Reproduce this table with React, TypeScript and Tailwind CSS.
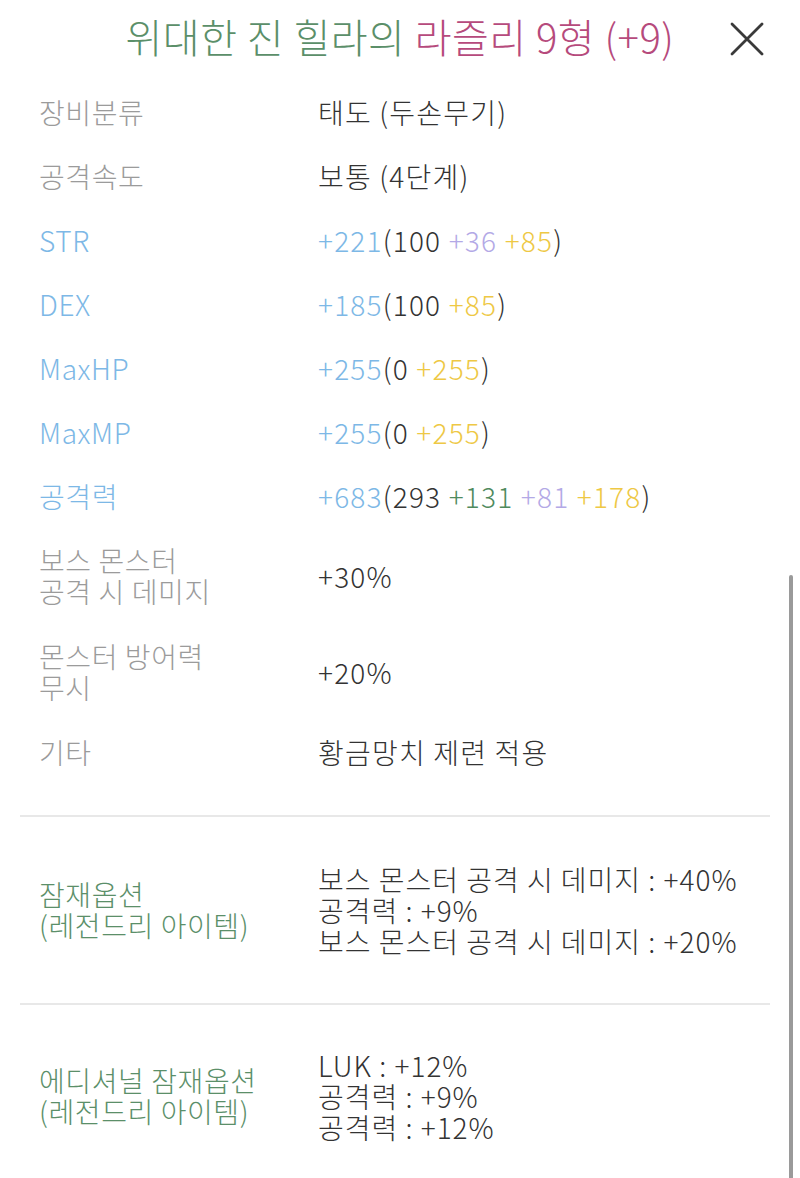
const font = { fontFamily: '"Noto Sans CJK KR", "Noto Sans", sans-serif' };

type Part = { t: string; c: string };

const BLUE = "text-[#7db8e6]";
const DARK = "text-[#333333]";
const PURPLE = "text-[#b3a9e6]";
const YELLOW = "text-[#eec845]";
const GREEN = "text-[#4f8a5d]";

function Stat({ parts }: { parts: Part[] }) {
  return (
    <span>
      {parts.map((p, i) => (
        <span key={i} className={p.c}>
          {p.t}
        </span>
      ))}
    </span>
  );
}

function Row({
  label,
  labelClass = "text-[#9b9b9b]",
  children,
  tall = false,
}: {
  label: React.ReactNode;
  labelClass?: string;
  children: React.ReactNode;
  tall?: boolean;
}) {
  return (
    <div className={`flex items-center ${tall ? "h-[96px]" : "h-[64px]"}`}>
      <div className={`w-[279px] shrink-0 leading-[31px] ${labelClass}`}>{label}</div>
      <div className="text-[#333333] leading-[31px] tracking-[1.2px]">{children}</div>
    </div>
  );
}

export default function App() {
  return (
    <div className="relative w-[800px] h-[1178px] overflow-hidden bg-white text-[28px] font-light tracking-[0.6px]" style={font}>
      <div className="h-[80px] flex items-center justify-center relative">
        <h1 className="text-[40px] font-light tracking-[0.5px] -mt-[8px]">
          <span className="text-[#5b8f69]">위대한 진 힐라의 </span>
          <span className="text-[#b64a7c]">라즐리 9형 (+9)</span>
        </h1>
        <button className="absolute left-[729px] top-[21px] w-[36px] h-[36px] flex items-center justify-center">
          <svg width="34" height="34" viewBox="0 0 34 34" fill="none" stroke="#3a3a3a" strokeWidth="2.8" strokeLinecap="round">
            <path d="M2 2 L32 32 M32 2 L2 32" />
          </svg>
        </button>
      </div>

      <div className="pl-[39px] pr-[30px]">
        <Row label="장비분류">태도 (두손무기)</Row>
        <Row label="공격속도">보통 (4단계)</Row>
        <Row label="STR" labelClass={BLUE}>
          <Stat
            parts={[
              { t: "+221", c: BLUE },
              { t: "(100 ", c: DARK },
              { t: "+36 ", c: PURPLE },
              { t: "+85", c: YELLOW },
              { t: ")", c: DARK },
            ]}
          />
        </Row>
        <Row label="DEX" labelClass={BLUE}>
          <Stat
            parts={[
              { t: "+185", c: BLUE },
              { t: "(100 ", c: DARK },
              { t: "+85", c: YELLOW },
              { t: ")", c: DARK },
            ]}
          />
        </Row>
        <Row label="MaxHP" labelClass={BLUE}>
          <Stat
            parts={[
              { t: "+255", c: BLUE },
              { t: "(0 ", c: DARK },
              { t: "+255", c: YELLOW },
              { t: ")", c: DARK },
            ]}
          />
        </Row>
        <Row label="MaxMP" labelClass={BLUE}>
          <Stat
            parts={[
              { t: "+255", c: BLUE },
              { t: "(0 ", c: DARK },
              { t: "+255", c: YELLOW },
              { t: ")", c: DARK },
            ]}
          />
        </Row>
        <Row label="공격력" labelClass={BLUE}>
          <Stat
            parts={[
              { t: "+683", c: BLUE },
              { t: "(293 ", c: DARK },
              { t: "+131 ", c: GREEN },
              { t: "+81 ", c: PURPLE },
              { t: "+178", c: YELLOW },
              { t: ")", c: DARK },
            ]}
          />
        </Row>
        <Row
          tall
          label={
            <>
              보스 몬스터
              <br />
              공격 시 데미지
            </>
          }
        >
          +30%
        </Row>
        <Row
          tall
          label={
            <>
              몬스터 방어력
              <br />
              무시
            </>
          }
        >
          +20%
        </Row>
        <Row label="기타">황금망치 제련 적용</Row>
      </div>

      <div className="mt-[31px] ml-[20px] mr-[30px] h-[2px] bg-[#e8e8e8]" />

      <div className="pl-[39px] pr-[30px] h-[186px] flex items-center">
        <div className="w-[279px] shrink-0 leading-[31px] text-[#5b8f69]">
          잠재옵션
          <br />
          (레전드리 아이템)
        </div>
        <div className="text-[#333333] leading-[31px] tracking-[1px]">
          보스 몬스터 공격 시 데미지 : +40%
          <br />
          공격력 : +9%
          <br />
          보스 몬스터 공격 시 데미지 : +20%
        </div>
      </div>

      <div className="ml-[20px] mr-[30px] h-[2px] bg-[#e8e8e8]" />

      <div className="pl-[39px] pr-[30px] h-[182px] flex items-center">
        <div className="w-[279px] shrink-0 leading-[31px] text-[#5b8f69]">
          에디셔널 잠재옵션
          <br />
          (레전드리 아이템)
        </div>
        <div className="text-[#333333] leading-[31px] tracking-[1px]">
          LUK : +12%
          <br />
          공격력 : +9%
          <br />
          공격력 : +12%
        </div>
      </div>

      <div className="absolute left-[789px] top-[575px] w-[4px] h-[620px] rounded-full bg-[#9a9a9a]" />
    </div>
  );
}
